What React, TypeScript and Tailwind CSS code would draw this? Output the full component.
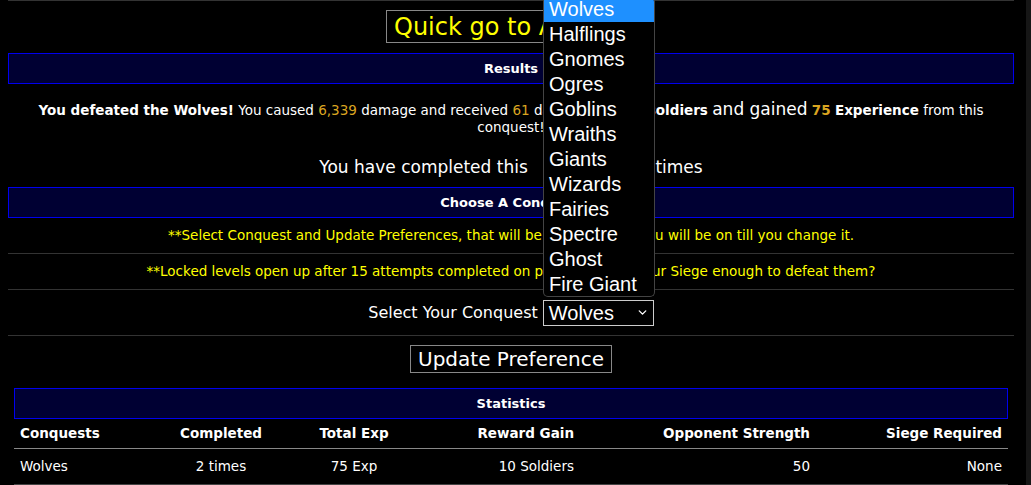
import { ChevronDown } from "lucide-react";

const conquests = [
  "Wolves",
  "Halflings",
  "Gnomes",
  "Ogres",
  "Goblins",
  "Wraiths",
  "Giants",
  "Wizards",
  "Fairies",
  "Spectre",
  "Ghost",
  "Fire Giant",
];

const font = { fontFamily: '"DejaVu Sans", Verdana, sans-serif' };
const arial = { fontFamily: '"Liberation Sans", Arial, sans-serif' };

function HeaderBar({ title }: { title: string }) {
  return (
    <div className="h-[31px] flex items-center justify-center bg-[#000033] border border-[#0000ee] text-white text-[13px] font-bold">
      {title}
    </div>
  );
}

function Gold({ children }: { children: React.ReactNode }) {
  return <span className="text-[#daa520]">{children}</span>;
}

export default function App() {
  return (
    <div className="min-h-screen w-[1031px] h-[485px] overflow-hidden bg-black flex text-white" style={font}>
      <div className="w-[1026px] relative">
        <div className="ml-2 w-[1006px] border-t border-[#333]">
          {/* Quick go */}
          <div className="flex pt-[9px] pl-[378px]">
            <button className="h-[33px] px-[7px] border border-[#888] text-[#ffff00] text-[24px] leading-none whitespace-nowrap">
              Quick go to Attack
            </button>
          </div>

          <div className="mt-[10px]">
            <HeaderBar title="Results" />
          </div>

          {/* Results text */}
          <div className="mt-[17px] px-[28px] text-center text-[13.5px] leading-[17px]">
            <b>You defeated the Wolves!</b> You caused <Gold>6,339</Gold> damage and received{" "}
            <Gold>61</Gold> damage, lost <Gold>10</Gold> <b>soldiers</b>{" "}
            <span className="text-[17px]">and gained</span> <Gold><b>75</b></Gold> <b>Experience</b> from this
            conquest!
          </div>

          <div className="mt-[21px] text-center text-[17px] leading-[20px]">
            You have completed this <span className="px-[10px]">Conquest 2</span> times
          </div>

          <div className="mt-[10px]">
            <HeaderBar title="Choose A Conquest" />
          </div>

          <div className="h-[36px] flex items-center justify-center border-b border-[#333] text-[#ffff00] text-[13.5px]">
            **Select Conquest and Update Preferences, that will be the conquest you will be on till you change it.
          </div>
          <div className="h-[36px] flex items-center justify-center border-b border-[#333] text-[#ffff00] text-[13.5px]">
            **Locked levels open up after 15 attempts completed on previous lvl, is your Siege enough to defeat them?
          </div>
          <div className="h-[46px] flex items-center justify-center gap-[5px] border-b border-[#333] text-[16px]">
            <span>Select Your Conquest</span>
            <div
              className="w-[111px] h-[26px] border border-[#ccc] flex items-center justify-between pl-[5px] pr-[4px] text-[20px] leading-none"
              style={arial}
            >
              Wolves
              <ChevronDown className="w-[13px] h-[13px]" strokeWidth={2.5} />
            </div>
          </div>

          <div className="flex justify-center mt-[9px]">
            <button className="h-[28px] px-[7px] border border-[#888] text-[20px] leading-none">
              Update Preference
            </button>
          </div>

          {/* Statistics */}
          <div className="mx-[6px] mt-[15px]">
            <HeaderBar title="Statistics" />
            <table className="w-full text-[13.5px] border-collapse">
              <colgroup>
                <col className="w-[146px]" />
                <col className="w-[122px]" />
                <col className="w-[144px]" />
                <col className="w-[154px]" />
                <col className="w-[236px]" />
                <col />
              </colgroup>
              <thead>
                <tr className="h-[29px] border-b border-[#888] font-bold">
                  <td className="px-[6px] text-left">Conquests</td>
                  <td className="px-[6px] text-center">Completed</td>
                  <td className="px-[6px] text-center">Total Exp</td>
                  <td className="px-[6px] text-right">Reward Gain</td>
                  <td className="px-[6px] text-right">Opponent Strength</td>
                  <td className="px-[6px] text-right">Siege Required</td>
                </tr>
              </thead>
              <tbody>
                <tr className="h-[36px] border-b border-[#444]">
                  <td className="px-[6px] text-left">Wolves</td>
                  <td className="px-[6px] text-center">2 times</td>
                  <td className="px-[6px] text-center">75 Exp</td>
                  <td className="px-[6px] text-right">10 Soldiers</td>
                  <td className="px-[6px] text-right">50</td>
                  <td className="px-[6px] text-right">None</td>
                </tr>
              </tbody>
            </table>
          </div>
        </div>

        {/* open select list */}
        <div
          className="absolute left-[543px] top-0 w-[112px] h-[297px] bg-black border border-[#444] border-t-0 rounded-b-[5px] overflow-hidden text-[20px] leading-[25px]"
          style={arial}
        >
          <div className="-mt-[3px]">
            {conquests.map((c, i) => (
              <div key={c} className={`h-[25px] pl-[5px] ${i === 0 ? "bg-[#1e90ff] rounded-tr-[5px]" : ""}`}>
                {c}
              </div>
            ))}
          </div>
        </div>
      </div>
      <div className="flex-1 bg-[#161616]" />
    </div>
  );
}
